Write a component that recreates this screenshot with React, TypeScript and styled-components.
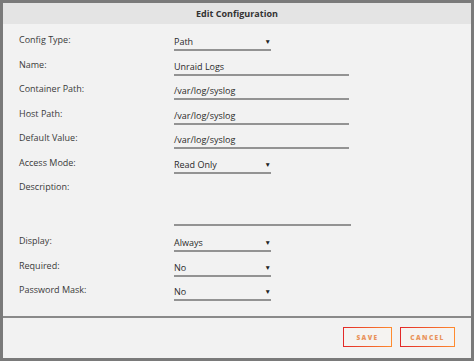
import styled, { createGlobalStyle } from "styled-components";

const Global = createGlobalStyle`
  html, body { margin: 0; padding: 0; background: #f2f2f2; }
  body { font-family: "Open Sans", "Noto Sans", sans-serif; }
`;

const Frame = styled.div`
  box-sizing: border-box;
  width: 474px;
  height: 361px;
  border: 3px solid #7a7a7a;
  background: #f2f2f2;
  display: flex;
  flex-direction: column;
`;

const Header = styled.div`
  height: 21px;
  background: #e4e4e4;
  display: flex;
  align-items: center;
  justify-content: center;
  font-size: 9px;
  font-weight: 700;
  color: #333;
`;

const Form = styled.div`
  flex: 1;
  padding: 6px 0 0 16px;
`;

const Row = styled.div<{ $tall?: boolean }>`
  display: grid;
  grid-template-columns: 155px 1fr;
  height: ${({ $tall }) => ($tall ? "54px" : "24.5px")};
`;

const Label = styled.div`
  font-size: 9px;
  line-height: 20px;
  color: #3a3a3a;
`;

const Field = styled.div<{ $w: number; $h?: number }>`
  box-sizing: border-box;
  width: ${({ $w }) => $w}px;
  height: ${({ $h }) => $h ?? 21}px;
  border-bottom: 2px solid #939393;
  display: flex;
  align-items: flex-start;
  justify-content: space-between;
  font-size: 9px;
  line-height: 23px;
  color: #2a2a2a;
`;

const Caret = styled.span`
  font-size: 6.5px;
  line-height: 23px;
  color: #222;
  margin-right: 0;
`;

const Footer = styled.div`
  box-sizing: border-box;
  height: 42px;
  border-top: 2px solid #8a8a8a;
  display: flex;
  justify-content: flex-end;
  align-items: flex-start;
  gap: 8px;
  padding: 9px 16px 0 0;
`;

const Button = styled.button<{ $w: number }>`
  box-sizing: border-box;
  width: ${({ $w }) => $w}px;
  height: 20px;
  padding: 0;
  background: #f5f3f1;
  border: 1px solid;
  border-image: linear-gradient(90deg, #e22828, #ff8c2f) 1;
  font-family: "Open Sans", sans-serif;
  font-size: 6.5px;
  font-weight: 800;
  letter-spacing: 1.4px;
  color: #e9935c;
  cursor: pointer;
`;

type Item = { label: string; value?: string; select?: boolean; tall?: boolean };

const items: Item[] = [
  { label: "Config Type:", value: "Path", select: true },
  { label: "Name:", value: "Unraid Logs" },
  { label: "Container Path:", value: "/var/log/syslog" },
  { label: "Host Path:", value: "/var/log/syslog" },
  { label: "Default Value:", value: "/var/log/syslog" },
  { label: "Access Mode:", value: "Read Only", select: true },
  { label: "Description:", value: "", tall: true },
  { label: "Display:", value: "Always", select: true },
  { label: "Required:", value: "No", select: true },
  { label: "Password Mask:", value: "No", select: true },
];

export default function App() {
  return (
    <>
      <Global />
      <Frame>
        <Header>Edit Configuration</Header>
        <Form>
          {items.map((it) => (
            <Row key={it.label} $tall={it.tall}>
              <Label>{it.label}</Label>
              <Field
                $w={it.select ? 97 : it.tall ? 177 : 175}
                $h={it.tall ? 49 : undefined}
              >
                <span>{it.value}</span>
                {it.select && <Caret>▼</Caret>}
              </Field>
            </Row>
          ))}
        </Form>
        <Footer>
          <Button $w={49}>SAVE</Button>
          <Button $w={55}>CANCEL</Button>
        </Footer>
      </Frame>
    </>
  );
}
